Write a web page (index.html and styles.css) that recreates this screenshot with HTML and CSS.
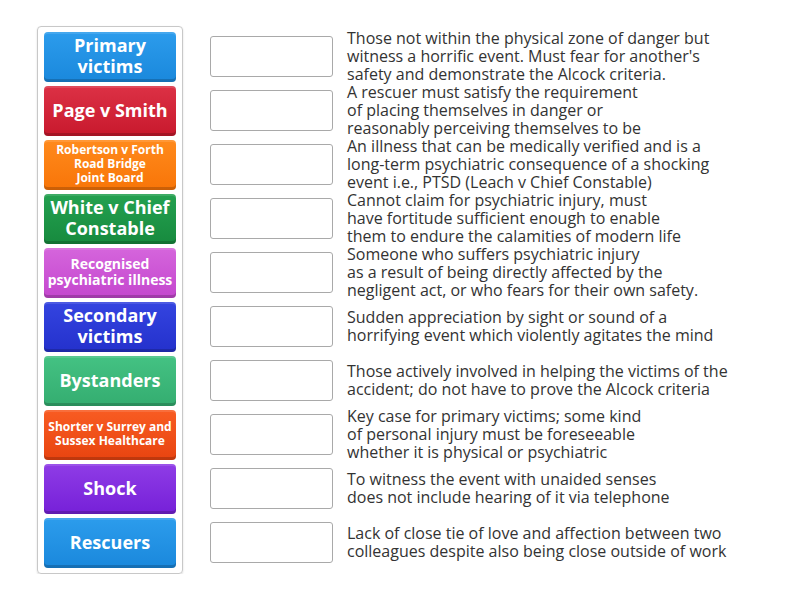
FILE: index.html
```html
<!DOCTYPE html>
<html>
<head>
<meta charset="utf-8">
<title>Match up</title>
<link rel="stylesheet" href="styles.css">
</head>
<body>
<div class="board">
  <div class="tiles">
    <div class="tile blue">Primary<br>victims</div>
    <div class="tile red">Page v Smith</div>
    <div class="tile orange small">Robertson v Forth<br>Road Bridge<br>Joint Board</div>
    <div class="tile green">White v Chief<br>Constable</div>
    <div class="tile pink mid">Recognised<br>psychiatric illness</div>
    <div class="tile navy">Secondary<br>victims</div>
    <div class="tile mint">Bystanders</div>
    <div class="tile flame small">Shorter v Surrey and<br>Sussex Healthcare</div>
    <div class="tile purple">Shock</div>
    <div class="tile blue">Rescuers</div>
  </div>
  <div class="rows">
    <div class="row"><div class="slot"></div><p>Those not within the physical zone of danger but<br>witness a horrific event. Must fear for another's<br>safety and demonstrate the Alcock criteria.</p></div>
    <div class="row"><div class="slot"></div><p>A rescuer must satisfy the requirement<br>of placing themselves in danger or<br>reasonably perceiving themselves to be</p></div>
    <div class="row"><div class="slot"></div><p>An illness that can be medically verified and is a<br>long-term psychiatric consequence of a shocking<br>event i.e., PTSD (Leach v Chief Constable)</p></div>
    <div class="row"><div class="slot"></div><p>Cannot claim for psychiatric injury, must<br>have fortitude sufficient enough to enable<br>them to endure the calamities of modern life</p></div>
    <div class="row"><div class="slot"></div><p>Someone who suffers psychiatric injury<br>as a result of being directly affected by the<br>negligent act, or who fears for their own safety.</p></div>
    <div class="row"><div class="slot"></div><p>Sudden appreciation by sight or sound of a<br>horrifying event which violently agitates the mind</p></div>
    <div class="row"><div class="slot"></div><p>Those actively involved in helping the victims of the<br>accident; do not have to prove the Alcock criteria</p></div>
    <div class="row"><div class="slot"></div><p>Key case for primary victims; some kind<br>of personal injury must be foreseeable<br>whether it is physical or psychiatric</p></div>
    <div class="row"><div class="slot"></div><p>To witness the event with unaided senses<br>does not include hearing of it via telephone</p></div>
    <div class="row"><div class="slot"></div><p>Lack of close tie of love and affection between two<br>colleagues despite also being close outside of work</p></div>
  </div>
</div>
</body>
</html>
```
FILE: styles.css
```css
body {margin: 0; background: #fff; font-family: "Open Sans", "Liberation Sans", sans-serif;}
.board {display: flex; gap: 27px; padding: 26px 0 0 37px;}

.tiles {display: flex; flex-direction: column; gap: 4px; width: 132px; padding: 5px 6px; border: 1px solid #c8c8c8; border-radius: 4px; box-shadow: 0 1px 2px rgba(0,0,0,0.15);}
.tile {height: 50px; box-sizing: border-box; display: flex; align-items: center; justify-content: center; text-align: center; color: #fff; font-weight: 700; font-size: 18px; line-height: 21px; border-radius: 4px; box-shadow: inset 0 -3px 0 rgba(0,0,0,0.18), inset 0 2px 0 rgba(255,255,255,0.12); padding-bottom: 2px;}
.tile.small {font-size: 12px; line-height: 14px;}
.tile.mid {font-size: 14px; line-height: 16px;}

.blue {background: linear-gradient(#2c9cec, #1a88dc);}
.red {background: linear-gradient(#dc3145, #c8192d);}
.orange {background: linear-gradient(#ff8a1c, #f87508);}
.green {background: linear-gradient(#24a150, #178a3e);}
.pink {background: linear-gradient(#d565dc, #c447ce);}
.navy {background: linear-gradient(#3444e0, #2431cc);}
.mint {background: linear-gradient(#44c283, #34ad70);}
.flame {background: linear-gradient(#f85c22, #e84410);}
.purple {background: linear-gradient(#8f3ce6, #7620d8);}

.rows {padding-top: 3px;}
.row {height: 54px; display: flex; align-items: center; gap: 14px;}
.slot {width: 123px; height: 41px; box-sizing: border-box; border: 1px solid #a9a9a9; border-radius: 3px; flex: none;}
.row p {margin: 0; font-size: 16px; line-height: 18px; color: #333;}
```
